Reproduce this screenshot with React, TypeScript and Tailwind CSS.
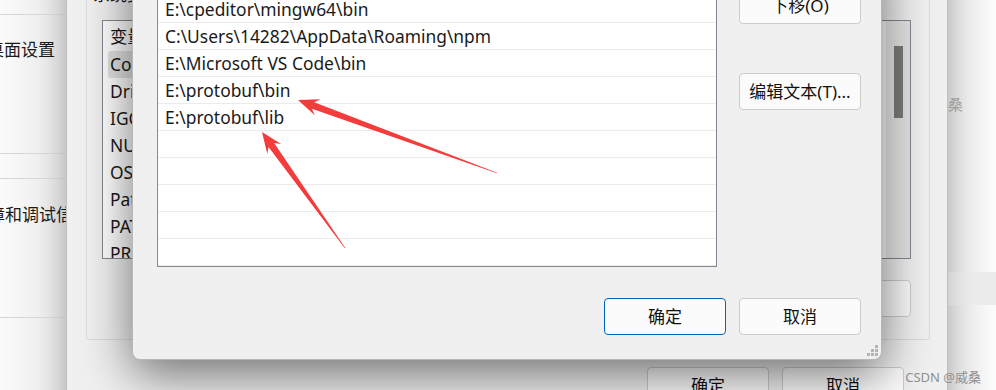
const uiFont = "font-['Noto_Sans','Noto_Sans_CJK_SC',sans-serif]";

const pathRows = [
  "%SystemRoot%\\System32\\OpenSSH\\",
  "E:\\cpeditor\\mingw64\\bin",
  "C:\\Users\\14282\\AppData\\Roaming\\npm",
  "E:\\Microsoft VS Code\\bin",
  "E:\\protobuf\\bin",
  "E:\\protobuf\\lib",
  "",
  "",
  "",
  "",
  "",
];

const sysVars = [
  { name: "ComSpec", selected: true },
  { name: "DriverData" },
  { name: "IGCCSVC_DB" },
  { name: "NUMBER_OF_PROCESSORS" },
  { name: "OS" },
  { name: "Path" },
  { name: "PATHEXT" },
  { name: "PROCESSOR_ARCHITECTURE" },
];

function Button({ label, primary, className = "" }: { label: string; primary?: boolean; className?: string }) {
  return (
    <div
      className={`flex h-[37px] w-[122px] shrink-0 items-center justify-center rounded-[4px] border bg-[#fbfbfb] text-[17px] text-[#111] ${
        primary ? "border-[#0067c0]" : "border-[#cccccc]"
      } ${className}`}
    >
      {label}
    </div>
  );
}

// tapered annotation arrow, tip first
function arrowPoints(tx: number, ty: number, ex: number, ey: number) {
  const dx = ex - tx;
  const dy = ey - ty;
  const len = Math.hypot(dx, dy);
  const ux = dx / len;
  const uy = dy / len;
  const px = -uy;
  const py = ux;
  const pt = (a: number, b: number) => `${(tx + ux * a + px * b).toFixed(1)},${(ty + uy * a + py * b).toFixed(1)}`;
  return [pt(0, 0), pt(21, 8.5), pt(16, 3.4), pt(len, 0.3), pt(len, -0.3), pt(16, -3.4), pt(21, -8.5)].join(" ");
}

function Backdrop() {
  return (
    <div className="absolute inset-0 flex">
      <div className="w-[66px] shrink-0 overflow-hidden whitespace-nowrap bg-gradient-to-r from-[#fbfbfb] via-[#f1f1f1] to-[#dedede]">
        <div className="h-[15px] border-b border-[#d6d6d6]" />
        <div className="flex h-[139px] justify-end border-b border-[#d6d6d6] pr-[11px] pt-[23px] leading-[24px]">
          与登录帐户相关的桌面设置
        </div>
        <div className="h-[25px] border-b border-[#d6d6d6]" />
        <div className="h-[139px] border-b border-[#d6d6d6] pt-[24px] leading-[24px]">
          <span className="ml-[-148px]">系统启动、系统故障和调试信息</span>
        </div>
      </div>
      <div className="flex-1" />
      <div className="flex w-[48px] shrink-0 flex-col bg-gradient-to-l from-[#fcfcfc] to-[#e0e0e0]">
        <div className="h-[94px]" />
        <div className="text-[15px] leading-[20px] text-[#a9a9a9]">桑</div>
        <div className="h-[158px]" />
        <div className="h-[33px] bg-[#ebebeb]" />
      </div>
    </div>
  );
}

function EnvWindow() {
  return (
    <div className="absolute left-[66px] top-[-40px] h-[480px] w-[882px] border border-[#bfbfbf] bg-[#f0f0f0] pl-[19px] pr-[17px] shadow-[0_0_24px_rgba(0,0,0,0.2)]">
      <fieldset className="mt-[23px] rounded-[2px] border border-[#dcdcdc]">
        <legend className="ml-[6px] text-[17px] leading-[22px]">系统变量(S)</legend>
        <div className="pl-[15px] pr-[18px] pt-[14px] pb-[22px]">
          <div className="flex h-[239px] overflow-hidden border border-[#828790] bg-white">
            <div className="flex flex-1 flex-col text-[17.4px]">
              <div className="flex h-[30px] shrink-0 items-center pl-[7px]">
                <span className="w-[300px]">变量</span>
                <span>值</span>
              </div>
              {sysVars.map((v) => (
                <div
                  key={v.name}
                  className={`mx-[5px] flex h-[27px] shrink-0 items-center rounded-[3px] pl-[2px] ${v.selected ? "bg-[#e3e3e3]" : ""}`}
                >
                  {v.name}
                </div>
              ))}
            </div>
            <div className="flex w-[24px] shrink-0 justify-center bg-gradient-to-r from-[#eeeeee] to-[#e4e4e4] pt-[25px]">
              <div className="h-[72px] w-[9px] bg-[#7d7d7d]" />
            </div>
          </div>
          <div className="mt-[21px] flex justify-end gap-[13px]">
            <Button label="新建(W)..." />
            <Button label="编辑(I)..." />
            <Button label="删除(L)" />
          </div>
        </div>
      </fieldset>
      <div className="mt-[27px] flex justify-end gap-[13px] pr-[26px]">
        <Button label="确定" />
        <Button label="取消" />
      </div>
    </div>
  );
}

function EditDialog() {
  return (
    <div className="absolute left-[132px] top-[-58px] w-[750px] rounded-b-[8px] border border-[#b8b8b8] bg-[#f0f0f0] pl-[24px] pr-[20px] pt-[25px] pb-[24px] shadow-[0_14px_50px_rgba(0,0,0,0.55)]">
      <div className="flex items-start gap-[22px]">
        <div className="h-[299px] w-[560px] shrink-0 overflow-hidden border border-[#828790] bg-white text-[17.4px]">
          {pathRows.map((p, i) => (
            <div key={i} className="flex h-[27px] items-center border-b border-[#ebebeb] pl-[7px] whitespace-nowrap">
              {p}
            </div>
          ))}
        </div>
        <div className="flex w-[122px] flex-col">
          <Button label="下移(O)" className="mt-[19px]" />
          <Button label="编辑文本(T)..." className="mt-[49px]" />
        </div>
      </div>
      <div className="mt-[31px] flex justify-end gap-[13px]">
        <Button label="确定" primary />
        <Button label="取消" />
      </div>
      <svg className="absolute bottom-[2px] right-[2px]" width="12" height="12" viewBox="0 0 12 12">
        <g fill="#b4b4b4">
          <rect x="8" y="0" width="3" height="3" />
          <rect x="4" y="4" width="3" height="3" />
          <rect x="8" y="4" width="3" height="3" />
          <rect x="0" y="8" width="3" height="3" />
          <rect x="4" y="8" width="3" height="3" />
          <rect x="8" y="8" width="3" height="3" />
        </g>
      </svg>
    </div>
  );
}

export default function App() {
  return (
    <div className={`relative h-[390px] w-[996px] overflow-hidden bg-[#fafafa] text-[17px] text-[#1a1a1a] ${uiFont}`}>
      <Backdrop />
      <EnvWindow />
      <EditDialog />
      <svg className="pointer-events-none absolute inset-0" width="996" height="390" viewBox="0 0 996 390">
        <polygon points={arrowPoints(298, 100, 497, 173)} fill="#f43c3c" />
        <polygon points={arrowPoints(262, 132, 345, 248)} fill="#f43c3c" />
      </svg>
      <span className="absolute bottom-[5px] right-[15px] text-[13px] leading-[16px] text-[#8f8f8f]">CSDN @威桑</span>
    </div>
  );
}
